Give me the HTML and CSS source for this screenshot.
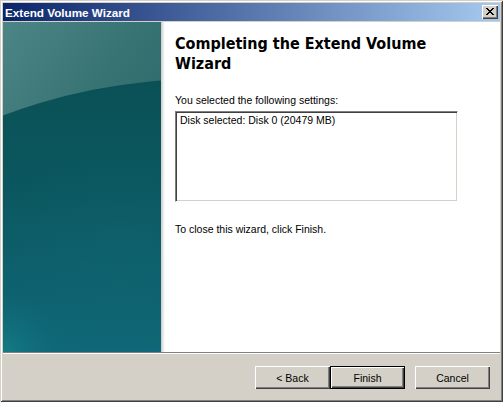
FILE: index.html
```html
<!DOCTYPE html>
<html>
<head>
<meta charset="utf-8">
<link rel="stylesheet" href="styles.css">
</head>
<body>
<div class="window">
  <div class="titlebar">
    <span class="title">Extend Volume Wizard</span>
    <span class="close">
      <svg width="8" height="7" viewBox="0 0 8 7"><path d="M0 0h2v1H0zM6 0h2v1H6zM1 1h2v1H1zM5 1h2v1H5zM2 2h4v1H2zM3 3h2v1H3zM2 4h4v1H2zM1 5h2v1H1zM5 5h2v1H5zM0 6h2v1H0zM6 6h2v1H6z" fill="#000"/></svg>
    </span>
  </div>
  <div class="body">
    <div class="side">
      <svg width="158" height="330" viewBox="0 0 158 330">
        <defs>
          <linearGradient id="top" gradientUnits="userSpaceOnUse" x1="0" y1="0" x2="158" y2="110">
            <stop offset="0" stop-color="#4c8585"/>
            <stop offset="0.6" stop-color="#387373"/>
            <stop offset="1" stop-color="#2c6a6b"/>
          </linearGradient>
          <linearGradient id="disc" gradientUnits="userSpaceOnUse" x1="0" y1="57" x2="0" y2="330">
            <stop offset="0" stop-color="#0a5156"/>
            <stop offset="0.4" stop-color="#0b575f"/>
            <stop offset="1" stop-color="#0f6879"/>
          </linearGradient>
          <radialGradient id="glow" gradientUnits="userSpaceOnUse" cx="0" cy="330" r="60">
            <stop offset="0" stop-color="#168088" stop-opacity="0.8"/>
            <stop offset="1" stop-color="#106c7b" stop-opacity="0"/>
          </radialGradient>
          <radialGradient id="inner" gradientUnits="userSpaceOnUse" cx="120" cy="260" r="140">
            <stop offset="0" stop-color="#0f6470" stop-opacity="0.5"/>
            <stop offset="1" stop-color="#0f6470" stop-opacity="0"/>
          </radialGradient>
        </defs>
        <rect width="158" height="330" fill="url(#top)"/>
        <circle cx="200" cy="622" r="565" fill="url(#disc)"/>
        <rect width="158" height="330" fill="url(#inner)"/>
        <rect width="158" height="330" fill="url(#glow)"/>
      </svg>
    </div>
    <div class="shade"></div>
    <div class="main">
      <h1 class="heading">Completing the Extend Volume Wizard</h1>
      <p class="label">You selected the following settings:</p>
      <div class="listbox">Disk selected: Disk 0 (20479 MB)</div>
      <p class="note">To close this wizard, click Finish.</p>
    </div>
  </div>
  <div class="sep"></div>
  <div class="footer">
    <div class="pair">
      <span class="btn">&lt; Back</span>
      <span class="btn default"><span class="btn-inner">Finish</span></span>
    </div>
    <span class="btn">Cancel</span>
  </div>
</div>
</body>
</html>
```

FILE: styles.css
```css
html, body {
  margin: 0;
  padding: 0;
  background: #d4d0c8;
  overflow: hidden;
}

.window {
  width: 503px;
  height: 402px;
  box-sizing: border-box;
  padding: 3px;
  background: #d4d0c8;
  box-shadow: inset 1px 1px 0 #d4d0c8, inset -1px -1px 0 #404040, inset 2px 2px 0 #ffffff, inset -2px -2px 0 #808080;
  display: flex;
  flex-direction: column;
  font-family: "Liberation Sans", Arial, sans-serif;
  font-size: 10.5px;
  color: #000;
}

.titlebar {
  height: 18px;
  margin-bottom: 1px;
  background: linear-gradient(to right, #0a246a, #a6caf0);
  display: flex;
  align-items: center;
  justify-content: space-between;
  padding: 0 2px 0 2px;
}

.title {
  color: #fff;
  font-weight: bold;
  font-size: 11.7px;
}

.close {
  width: 16px;
  height: 14px;
  box-sizing: border-box;
  background: #d4d0c8;
  box-shadow: inset 1px 1px 0 #ffffff, inset -1px -1px 0 #404040, inset -2px -2px 0 #808080;
  display: flex;
  align-items: center;
  justify-content: center;
  padding: 0 1px 1px 0;
}

.close svg {
  display: block;
}

.body {
  height: 330px;
  display: flex;
  background: #fff;
}

.side {
  width: 158px;
  height: 330px;
  flex: none;
}

.side svg {
  display: block;
}

.shade {
  width: 4px;
  flex: none;
  background: linear-gradient(to right, #c8c8c8, #ececec 60%, #ffffff);
}

.main {
  flex: 1;
  padding: 12px 0 0 10px;
}

.heading {
  margin: 0;
  width: 300px;
  font-family: "DejaVu Sans Condensed", "DejaVu Sans", Verdana, sans-serif;
  font-stretch: semi-condensed;
  font-weight: bold;
  font-size: 16px;
  line-height: 20px;
}

.label {
  margin: 20px 0 0 0;
  line-height: 13px;
}

.listbox {
  margin-top: 4px;
  width: 283px;
  height: 91px;
  box-sizing: border-box;
  padding: 2px 3px 0 4px;
  line-height: 13px;
  border-top: 1px solid #808080;
  border-left: 1px solid #808080;
  border-right: 1px solid #ffffff;
  border-bottom: 1px solid #ffffff;
  box-shadow: inset 1px 1px 0 #404040, inset -1px -1px 0 #d4d0c8;
}

.note {
  margin: 21px 0 0 0;
  line-height: 13px;
}

.sep {
  height: 0;
  border-top: 1px solid #808080;
  border-bottom: 1px solid #ffffff;
}

.footer {
  flex: 1;
  display: flex;
  justify-content: flex-end;
  align-items: flex-start;
  gap: 10px;
  padding: 12px 10px 0 0;
}

.pair {
  display: flex;
}

.btn {
  width: 75px;
  height: 23px;
  box-sizing: border-box;
  display: flex;
  align-items: center;
  justify-content: center;
  background: #d4d0c8;
  box-shadow: inset 1px 1px 0 #ffffff, inset -1px -1px 0 #404040, inset -2px -2px 0 #808080;
}

.btn.default {
  box-shadow: none;
  border: 1px solid #000;
}

.btn-inner {
  width: 100%;
  height: 100%;
  display: flex;
  align-items: center;
  justify-content: center;
  box-shadow: inset 1px 1px 0 #ffffff, inset -1px -1px 0 #404040, inset -2px -2px 0 #808080;
}
```
